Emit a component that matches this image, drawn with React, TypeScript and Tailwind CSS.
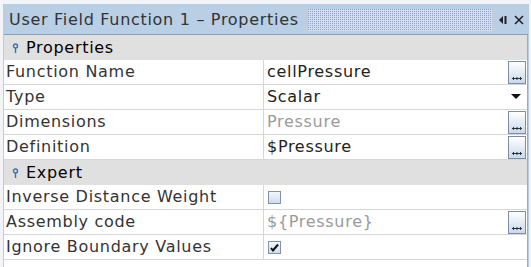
import React from "react";

// --- Small drawn glyphs ---

function KeyIcon() {
  return (
    <svg width="7" height="10" viewBox="0 0 7 10" className="mr-[7px] shrink-0">
      <circle cx="3.5" cy="3" r="2" fill="none" stroke="#3d6fb3" strokeWidth="1.4" />
      <line x1="3.5" y1="5" x2="3.5" y2="10" stroke="#3d6fb3" strokeWidth="1.4" />
    </svg>
  );
}

function EllipsisButton() {
  return (
    <div className="ml-auto mr-[1px] w-[18px] h-[23px] shrink-0 border border-[#7d8ea3] bg-gradient-to-b from-white to-[#c9d9ec] flex items-end justify-center pb-[3px]">
      <svg width="10" height="3" viewBox="0 0 10 3">
        <line x1="0" y1="1.5" x2="10" y2="1.5" stroke="#333" strokeWidth="1" />
        <rect x="1" y="0" width="1" height="3" fill="#333" />
        <rect x="4.5" y="0" width="1" height="3" fill="#333" />
        <rect x="8" y="0" width="1" height="3" fill="#333" />
      </svg>
    </div>
  );
}

function Checkbox({ checked }: { checked?: boolean }) {
  return (
    <div className="ml-[1px] w-[13px] h-[13px] border border-[#7f93ad] bg-gradient-to-b from-[#f4f7fb] to-[#cfdcec] flex items-center justify-center">
      {checked && (
        <svg width="9" height="9" viewBox="0 0 9 9">
          <path d="M1 5 L3 7.5 L8 1.5" fill="none" stroke="#111" strokeWidth="2" />
        </svg>
      )}
    </div>
  );
}

// --- Rows ---

function SectionHeader({ title }: { title: string }) {
  return (
    <div className="h-[25px] bg-[#e0e0e0] flex items-center pl-[8px] text-black">
      <KeyIcon />
      <span>{title}</span>
    </div>
  );
}

function Row({
  label,
  children,
}: {
  label: string;
  children: React.ReactNode;
}) {
  return (
    <div className="h-[25px] flex border-b border-[#d6d6d6] bg-white">
      <div className="w-[260px] shrink-0 border-r border-[#d6d6d6] flex items-center pl-[2px] text-[#333] whitespace-nowrap">
        {label}
      </div>
      <div className="flex-1 flex items-center pl-[3px] text-[#222] whitespace-nowrap">
        {children}
      </div>
    </div>
  );
}

export default function App() {
  return (
    <div
      className="w-[531px] h-[267px] bg-[#f2f4f7] overflow-hidden pl-[3px] pt-[4px] pr-[2px] text-[16px] tracking-[0.7px]"
      style={{ fontFamily: '"DejaVu Sans", sans-serif' }}
    >
      <div className="h-full border-l border-t border-r border-[#b7cde4] flex flex-col bg-white">
        {/* title bar */}
        <div className="h-[30px] shrink-0 bg-[#b8cfe5] border-b border-[#8e9bab] flex items-center pl-[5px] pr-[6px]">
          <span className="text-[#333] whitespace-nowrap">
            User Field Function 1 – Properties
          </span>
          <svg width="184" height="22" className="ml-[9px] shrink-0">
            <defs>
              <pattern id="dots" width="2" height="2" patternUnits="userSpaceOnUse">
                <rect width="2" height="2" fill="#d0def0" />
                <rect width="1" height="1" fill="#86a6d6" />
              </pattern>
            </defs>
            <rect width="184" height="22" fill="url(#dots)" />
          </svg>
          <svg width="8" height="10" viewBox="0 0 8 10" className="ml-[7px] shrink-0">
            <path d="M0 5 L4 1 L4 9 Z" fill="#222" />
            <rect x="5.5" y="1" width="2" height="8" fill="#222" />
          </svg>
          <svg width="10" height="10" viewBox="0 0 10 10" className="ml-[7px] shrink-0">
            <path d="M1 1 L9 9 M9 1 L1 9" stroke="#222" strokeWidth="1.6" />
          </svg>
        </div>

        {/* property sheet */}
        <div className="flex-1 border-r border-[#a9a9a9] bg-white">
          <SectionHeader title="Properties" />
          <Row label="Function Name">
            <span>cellPressure</span>
            <EllipsisButton />
          </Row>
          <Row label="Type">
            <span>Scalar</span>
            <svg width="10" height="6" viewBox="0 0 10 6" className="ml-auto mr-[6px]">
              <path d="M0 0 L10 0 L5 5 Z" fill="#111" />
            </svg>
          </Row>
          <Row label="Dimensions">
            <span className="text-[#9a9a9a]">Pressure</span>
            <EllipsisButton />
          </Row>
          <Row label="Definition">
            <span>$Pressure</span>
            <EllipsisButton />
          </Row>
          <SectionHeader title="Expert" />
          <Row label="Inverse Distance Weight">
            <Checkbox />
          </Row>
          <Row label="Assembly code">
            <span className="text-[#9a9a9a]">{"${Pressure}"}</span>
            <EllipsisButton />
          </Row>
          <Row label="Ignore Boundary Values">
            <Checkbox checked />
          </Row>
        </div>
      </div>
    </div>
  );
}
